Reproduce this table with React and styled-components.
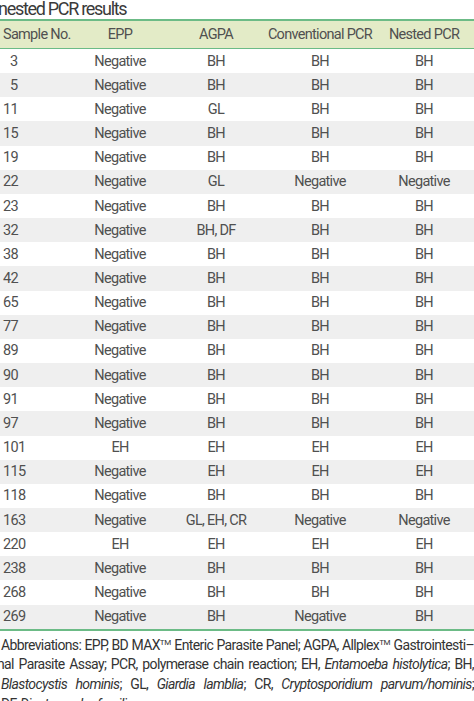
import React from "react";
import styled, { createGlobalStyle } from "styled-components";

const Global = createGlobalStyle`
  html, body { margin: 0; padding: 0; background: #fff; }
  body { font-family: Roboto, "Liberation Sans", sans-serif; }
`;

const Page = styled.div`
  width: 474px;
  height: 701px;
  overflow: hidden;
  color: #505050;
`;

const Title = styled.div`
  margin-top: -1px;
  height: 20px;
  line-height: 20px;
  font-size: 18px;
  letter-spacing: -1.3px;
  color: #3a3a3a;
  text-indent: -2px;
  white-space: nowrap;
`;

const Table = styled.div`
  border-top: 2px solid #6cbb86;
  border-bottom: 2px solid #6cbb86;
`;

const Row = styled.div`
  display: grid;
  grid-template-columns: 74px 92px 100px 108px 100px;
  align-items: center;
  height: ${(p) => (p.$head ? "27px" : "24.17px")};
  background: ${(p) => (p.$head ? "#e3ebc7" : p.$shade ? "#efefef" : "#ffffff")};
  border-bottom: ${(p) => (p.$head ? "1px solid #6cbb86" : "none")};
  font-size: 14.5px;
  letter-spacing: -0.7px;
`;

const Cell = styled.div`
  text-align: ${(p) => (p.$left ? "left" : "center")};
  padding-left: ${(p) => (p.$indent ? `${p.$indent}px` : "0")};
  white-space: nowrap;
`;

const Notes = styled.div`
  margin-top: 5px;
  font-size: 14px;
  line-height: 19.6px;
  letter-spacing: -0.62px;
  color: #333;
`;

const NoteLine = styled.div`
  white-space: nowrap;
  text-align: justify;
  margin-left: ${(p) => (p.$shift ? `${p.$shift}px` : "0")};
  width: ${(p) => `${474 - (p.$shift || 0)}px`};
  text-align-last: ${(p) => (p.$free ? "left" : "justify")};
`;

const Sup = styled.sup`
  font-size: 8px;
  line-height: 0;
  vertical-align: 5px;
  letter-spacing: -0.3px;
`;

const rows = [
  [3, "Negative", "BH", "BH", "BH"],
  [5, "Negative", "BH", "BH", "BH"],
  [11, "Negative", "GL", "BH", "BH"],
  [15, "Negative", "BH", "BH", "BH"],
  [19, "Negative", "BH", "BH", "BH"],
  [22, "Negative", "GL", "Negative", "Negative"],
  [23, "Negative", "BH", "BH", "BH"],
  [32, "Negative", "BH, DF", "BH", "BH"],
  [38, "Negative", "BH", "BH", "BH"],
  [42, "Negative", "BH", "BH", "BH"],
  [65, "Negative", "BH", "BH", "BH"],
  [77, "Negative", "BH", "BH", "BH"],
  [89, "Negative", "BH", "BH", "BH"],
  [90, "Negative", "BH", "BH", "BH"],
  [91, "Negative", "BH", "BH", "BH"],
  [97, "Negative", "BH", "BH", "BH"],
  [101, "EH", "EH", "EH", "EH"],
  [115, "Negative", "EH", "EH", "EH"],
  [118, "Negative", "BH", "BH", "BH"],
  [163, "Negative", "GL, EH, CR", "Negative", "Negative"],
  [220, "EH", "EH", "EH", "EH"],
  [238, "Negative", "BH", "BH", "BH"],
  [268, "Negative", "BH", "BH", "BH"],
  [269, "Negative", "BH", "Negative", "BH"],
];

export default function App() {
  return (
    <Page>
      <Global />
      <Title>nested PCR results</Title>
      <Table>
        <Row $head>
          <Cell $left $indent={3}>Sample No.</Cell>
          <Cell>EPP</Cell>
          <Cell>AGPA</Cell>
          <Cell>Conventional PCR</Cell>
          <Cell>Nested PCR</Cell>
        </Row>
        {rows.map((r, i) => (
          <Row key={r[0]} $shade={i % 2 === 1}>
            <Cell $left $indent={r[0] < 10 ? 10 : 3}>{r[0]}</Cell>
            <Cell>{r[1]}</Cell>
            <Cell>{r[2]}</Cell>
            <Cell>{r[3]}</Cell>
            <Cell>{r[4]}</Cell>
          </Row>
        ))}
      </Table>
      <Notes>
        <NoteLine $shift={1}>
          Abbreviations: EPP, BD MAX<Sup>TM</Sup> Enteric Parasite Panel; AGPA, Allplex<Sup>TM</Sup> Gastrointesti–
        </NoteLine>
        <NoteLine $shift={-3}>
          nal Parasite Assay; PCR, polymerase chain reaction; EH, <i>Entamoeba histolytica</i>; BH,
        </NoteLine>
        <NoteLine $shift={1}>
          <i>Blastocystis hominis</i>; GL, <i>Giardia lamblia</i>; CR, <i>Cryptosporidium parvum/hominis</i>;
        </NoteLine>
        <NoteLine $free $shift={1}>
          DF, <i>Dientamoeba fragilis</i>.
        </NoteLine>
      </Notes>
    </Page>
  );
}
